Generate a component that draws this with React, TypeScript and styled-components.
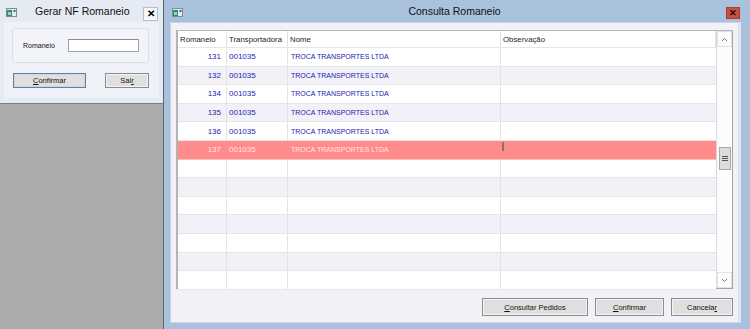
import styled, { createGlobalStyle } from "styled-components";

const GlobalStyle = createGlobalStyle`
  html, body {
    margin: 0;
    padding: 0;
    background: #ababab;
  }
  * {
    box-sizing: border-box;
  }
`;

const Screen = styled.div`
  width: 750px;
  height: 329px;
  display: flex;
  overflow: hidden;
  font-family: "Liberation Sans", Arial, sans-serif;
`;

const Desktop = styled.div`
  width: 163px;
  display: flex;
  flex-direction: column;
  background: #ababab;
`;

const SmallWindow = styled.div`
  height: 104px;
  background: #e6eaf2;
  border-bottom: 1px solid #7c7c7c;
  display: flex;
  flex-direction: column;
  padding: 0 4px 5px 4px;
`;

const TitleBar = styled.div<{ $active?: boolean }>`
  height: 22px;
  flex: none;
  display: flex;
  align-items: center;
  background: ${(p) => (p.$active ? "#a9c1dd" : "transparent")};
`;

const TitleText = styled.span<{ $center?: boolean }>`
  font-size: 10.5px;
  color: #111;
  ${(p) => (p.$center ? "flex: 1; text-align: center;" : "margin-left: 18px;")}
`;

const IconBox = styled.span`
  display: flex;
  margin-left: 2px;
  margin-top: 3px;
`;

const SmallClose = styled.span`
  margin-left: auto;
  margin-top: 5px;
  margin-right: 1px;
  width: 15px;
  height: 14px;
  border: 1px solid #b9bec8;
  background: #f7f8fb;
  display: flex;
  align-items: center;
  justify-content: center;
  font-size: 10px;
  font-weight: bold;
  color: #000;
`;

const RedClose = styled.span`
  margin-left: auto;
  margin-right: 1px;
  margin-top: 3px;
  width: 14px;
  height: 12px;
  background: #c9503f;
  border: 1px solid #a84030;
  display: flex;
  align-items: center;
  justify-content: center;
  font-size: 9px;
  font-weight: bold;
  color: #1a0a08;
`;

const SmallClient = styled.div`
  flex: 1;
  background: #eff1f8;
  padding: 6px 10px 0 8px;
  display: flex;
  flex-direction: column;
`;

const GroupBox = styled.div`
  height: 35px;
  border: 1px solid #dcdee6;
  border-radius: 3px;
  background: #f3f4f9;
  display: flex;
  align-items: center;
  padding-left: 10px;
  gap: 13px;
`;

const Label = styled.span`
  font-size: 7px;
  color: #111;
`;

const TextInput = styled.div`
  width: 71px;
  height: 13px;
  background: #fff;
  border: 1px solid #9fa4ab;
  border-top-color: #8a8f96;
`;

const SmallButtons = styled.div`
  display: flex;
  justify-content: space-between;
  margin-top: 10px;
  padding-left: 1px;
`;

const Button = styled.div<{ $w: number; $h?: number; $default?: boolean }>`
  width: ${(p) => p.$w}px;
  height: ${(p) => p.$h ?? 18}px;
  display: flex;
  align-items: center;
  justify-content: center;
  font-size: 7.5px;
  color: #111;
  background: #dfdfdf;
  border: 1px solid ${(p) => (p.$default ? "#5f7fa3" : "#8c8c8c")};
  box-shadow: inset 0 0 0 1px ${(p) => (p.$default ? "#c8d8ea" : "#f3f3f3")};
  u {
    text-decoration: underline;
  }
`;

const BigWindow = styled.div`
  flex: 1;
  display: flex;
  flex-direction: column;
  background: #a9c1dd;
  border-left: 1px solid #5d6470;
  padding: 0 9px 6px 6px;
`;

const Client = styled.div`
  flex: 1;
  background: #f1f1f7;
  border: 1px solid #c9d5e5;
  border-right: 3px solid #dde5f0;
  padding: 7px 5px 0 5px;
  display: flex;
  flex-direction: column;
`;

const Grid = styled.div`
  height: 259px;
  display: flex;
  background: #fff;
  border: 1px solid #a4a4a4;
  border-left: 2px solid #b4b4b4;
  border-top-color: #b8b8b8;
`;

const Table = styled.div`
  flex: 1;
  display: flex;
  flex-direction: column;
`;

const Row = styled.div<{ $alt?: boolean; $selected?: boolean; $header?: boolean }>`
  height: ${(p) => (p.$header ? "17px" : "18.6px")};
  flex: none;
  display: grid;
  grid-template-columns: 49px 61px 213px 1fr;
  background: ${(p) => (p.$selected ? "#ff8b8b" : p.$alt ? "#f1f1f7" : "#fff")};
  border-bottom: 1px solid ${(p) => (p.$selected ? "#f2c0c0" : "#e6e6ea")};
  color: ${(p) => (p.$selected ? "#ffe6e6" : p.$header ? "#1e1e1e" : "#1c1cb0")};
`;

const Cell = styled.div<{ $right?: boolean; $caps?: boolean; $plain?: boolean }>`
  display: flex;
  align-items: center;
  justify-content: ${(p) => (p.$right ? "flex-end" : "flex-start")};
  padding: ${(p) => (p.$right ? "0 5px 0 0" : p.$caps ? "0 0 0 3px" : "0 0 0 2px")};
  font-size: ${(p) => (p.$caps ? "7px" : "8px")};
  border-right: 1px solid ${(p) => (p.$plain ? "transparent" : "#e4e4e8")};
  white-space: nowrap;
  overflow: hidden;
  position: relative;
`;

const HeaderCell = styled(Cell)`
  font-size: 7.8px;
  border-right: 1px solid #e2e2e2;
`;

const Caret = styled.span`
  position: absolute;
  left: 1px;
  top: 1px;
  width: 2px;
  height: 9px;
  background: #7c7676;
`;

const Scrollbar = styled.div`
  width: 16px;
  display: flex;
  flex-direction: column;
  background: #fcfcfc;
  border-left: 1px solid #dadada;
`;

const Arrow = styled.div`
  height: 16px;
  display: flex;
  align-items: center;
  justify-content: center;
  border: 1px solid #e2e2e2;
`;

const Track = styled.div`
  flex: 1;
  display: flex;
  flex-direction: column;
  align-items: center;
`;

const Thumb = styled.div`
  margin-top: 100px;
  width: 12px;
  height: 23px;
  background: #dcdcdc;
  border: 1px solid #a9a9a9;
  display: flex;
  align-items: center;
  justify-content: center;
`;

const ButtonBar = styled.div`
  display: flex;
  justify-content: flex-end;
  gap: 7px;
  margin-top: 9px;
`;

const WinIcon = () => (
  <svg width="11" height="9" viewBox="0 0 11 9">
    <rect x="0.5" y="0.5" width="10" height="8" fill="#e4ebf1" stroke="#7d8d9a" />
    <rect x="1" y="2" width="5" height="6" fill="#2f8c74" />
    <rect x="2" y="4" width="3" height="3" fill="#9fd0c0" />
    <rect x="7.5" y="2" width="2" height="2" fill="#4a5a66" />
  </svg>
);

const Chevron = ({ up }: { up?: boolean }) => (
  <svg width="7" height="5" viewBox="0 0 7 5">
    <path
      d={up ? "M1 4 L3.5 1.5 L6 4" : "M1 1 L3.5 3.5 L6 1"}
      fill="none"
      stroke="#7a7a7a"
      strokeWidth="1"
    />
  </svg>
);

const Grip = () => (
  <svg width="6" height="6" viewBox="0 0 6 6">
    <path d="M0 0.5H6M0 2.5H6M0 4.5H6" stroke="#555" strokeWidth="1" />
  </svg>
);

const rows = [
  { id: "131" },
  { id: "132" },
  { id: "134" },
  { id: "135" },
  { id: "136" },
  { id: "137", selected: true },
];

export default function App() {
  const empty = Array.from({ length: 7 });
  return (
    <>
      <GlobalStyle />
      <Screen>
        <Desktop>
          <SmallWindow>
            <TitleBar>
              <IconBox>
                <WinIcon />
              </IconBox>
              <TitleText>Gerar NF Romaneio</TitleText>
              <SmallClose>✕</SmallClose>
            </TitleBar>
            <SmallClient>
              <GroupBox>
                <Label>Romaneio</Label>
                <TextInput />
              </GroupBox>
              <SmallButtons>
                <Button $w={73} $h={15} $default>
                  <span>
                    <u>C</u>onfirmar
                  </span>
                </Button>
                <Button $w={44} $h={15}>
                  <span>
                    Sai<u>r</u>
                  </span>
                </Button>
              </SmallButtons>
            </SmallClient>
          </SmallWindow>
        </Desktop>

        <BigWindow>
          <TitleBar $active>
            <IconBox>
              <WinIcon />
            </IconBox>
            <TitleText $center>Consulta Romaneio</TitleText>
            <RedClose>✕</RedClose>
          </TitleBar>
          <Client>
            <Grid>
              <Table>
                <Row $header>
                  <HeaderCell>Romaneio</HeaderCell>
                  <HeaderCell>Transportadora</HeaderCell>
                  <HeaderCell>Nome</HeaderCell>
                  <HeaderCell>Observação</HeaderCell>
                </Row>
                {rows.map((r, i) => (
                  <Row key={r.id} $alt={i % 2 === 1} $selected={r.selected}>
                    <Cell $right $plain={r.selected}>
                      {r.id}
                    </Cell>
                    <Cell $plain={r.selected}>001035</Cell>
                    <Cell $caps $plain={r.selected}>
                      TROCA TRANSPORTES LTDA
                    </Cell>
                    <Cell $plain>{r.selected && <Caret />}</Cell>
                  </Row>
                ))}
                {empty.map((_, i) => (
                  <Row key={"e" + i} $alt={i % 2 === 1}>
                    <Cell />
                    <Cell />
                    <Cell />
                    <Cell $plain />
                  </Row>
                ))}
              </Table>
              <Scrollbar>
                <Arrow>
                  <Chevron up />
                </Arrow>
                <Track>
                  <Thumb>
                    <Grip />
                  </Thumb>
                </Track>
                <Arrow>
                  <Chevron />
                </Arrow>
              </Scrollbar>
            </Grid>
            <ButtonBar>
              <Button $w={106}>
                <span>
                  <u>C</u>onsultar Pedidos
                </span>
              </Button>
              <Button $w={69}>
                <span>
                  <u>C</u>onfirmar
                </span>
              </Button>
              <Button $w={62}>
                <span>
                  Cancela<u>r</u>
                </span>
              </Button>
            </ButtonBar>
          </Client>
        </BigWindow>
      </Screen>
    </>
  );
}
